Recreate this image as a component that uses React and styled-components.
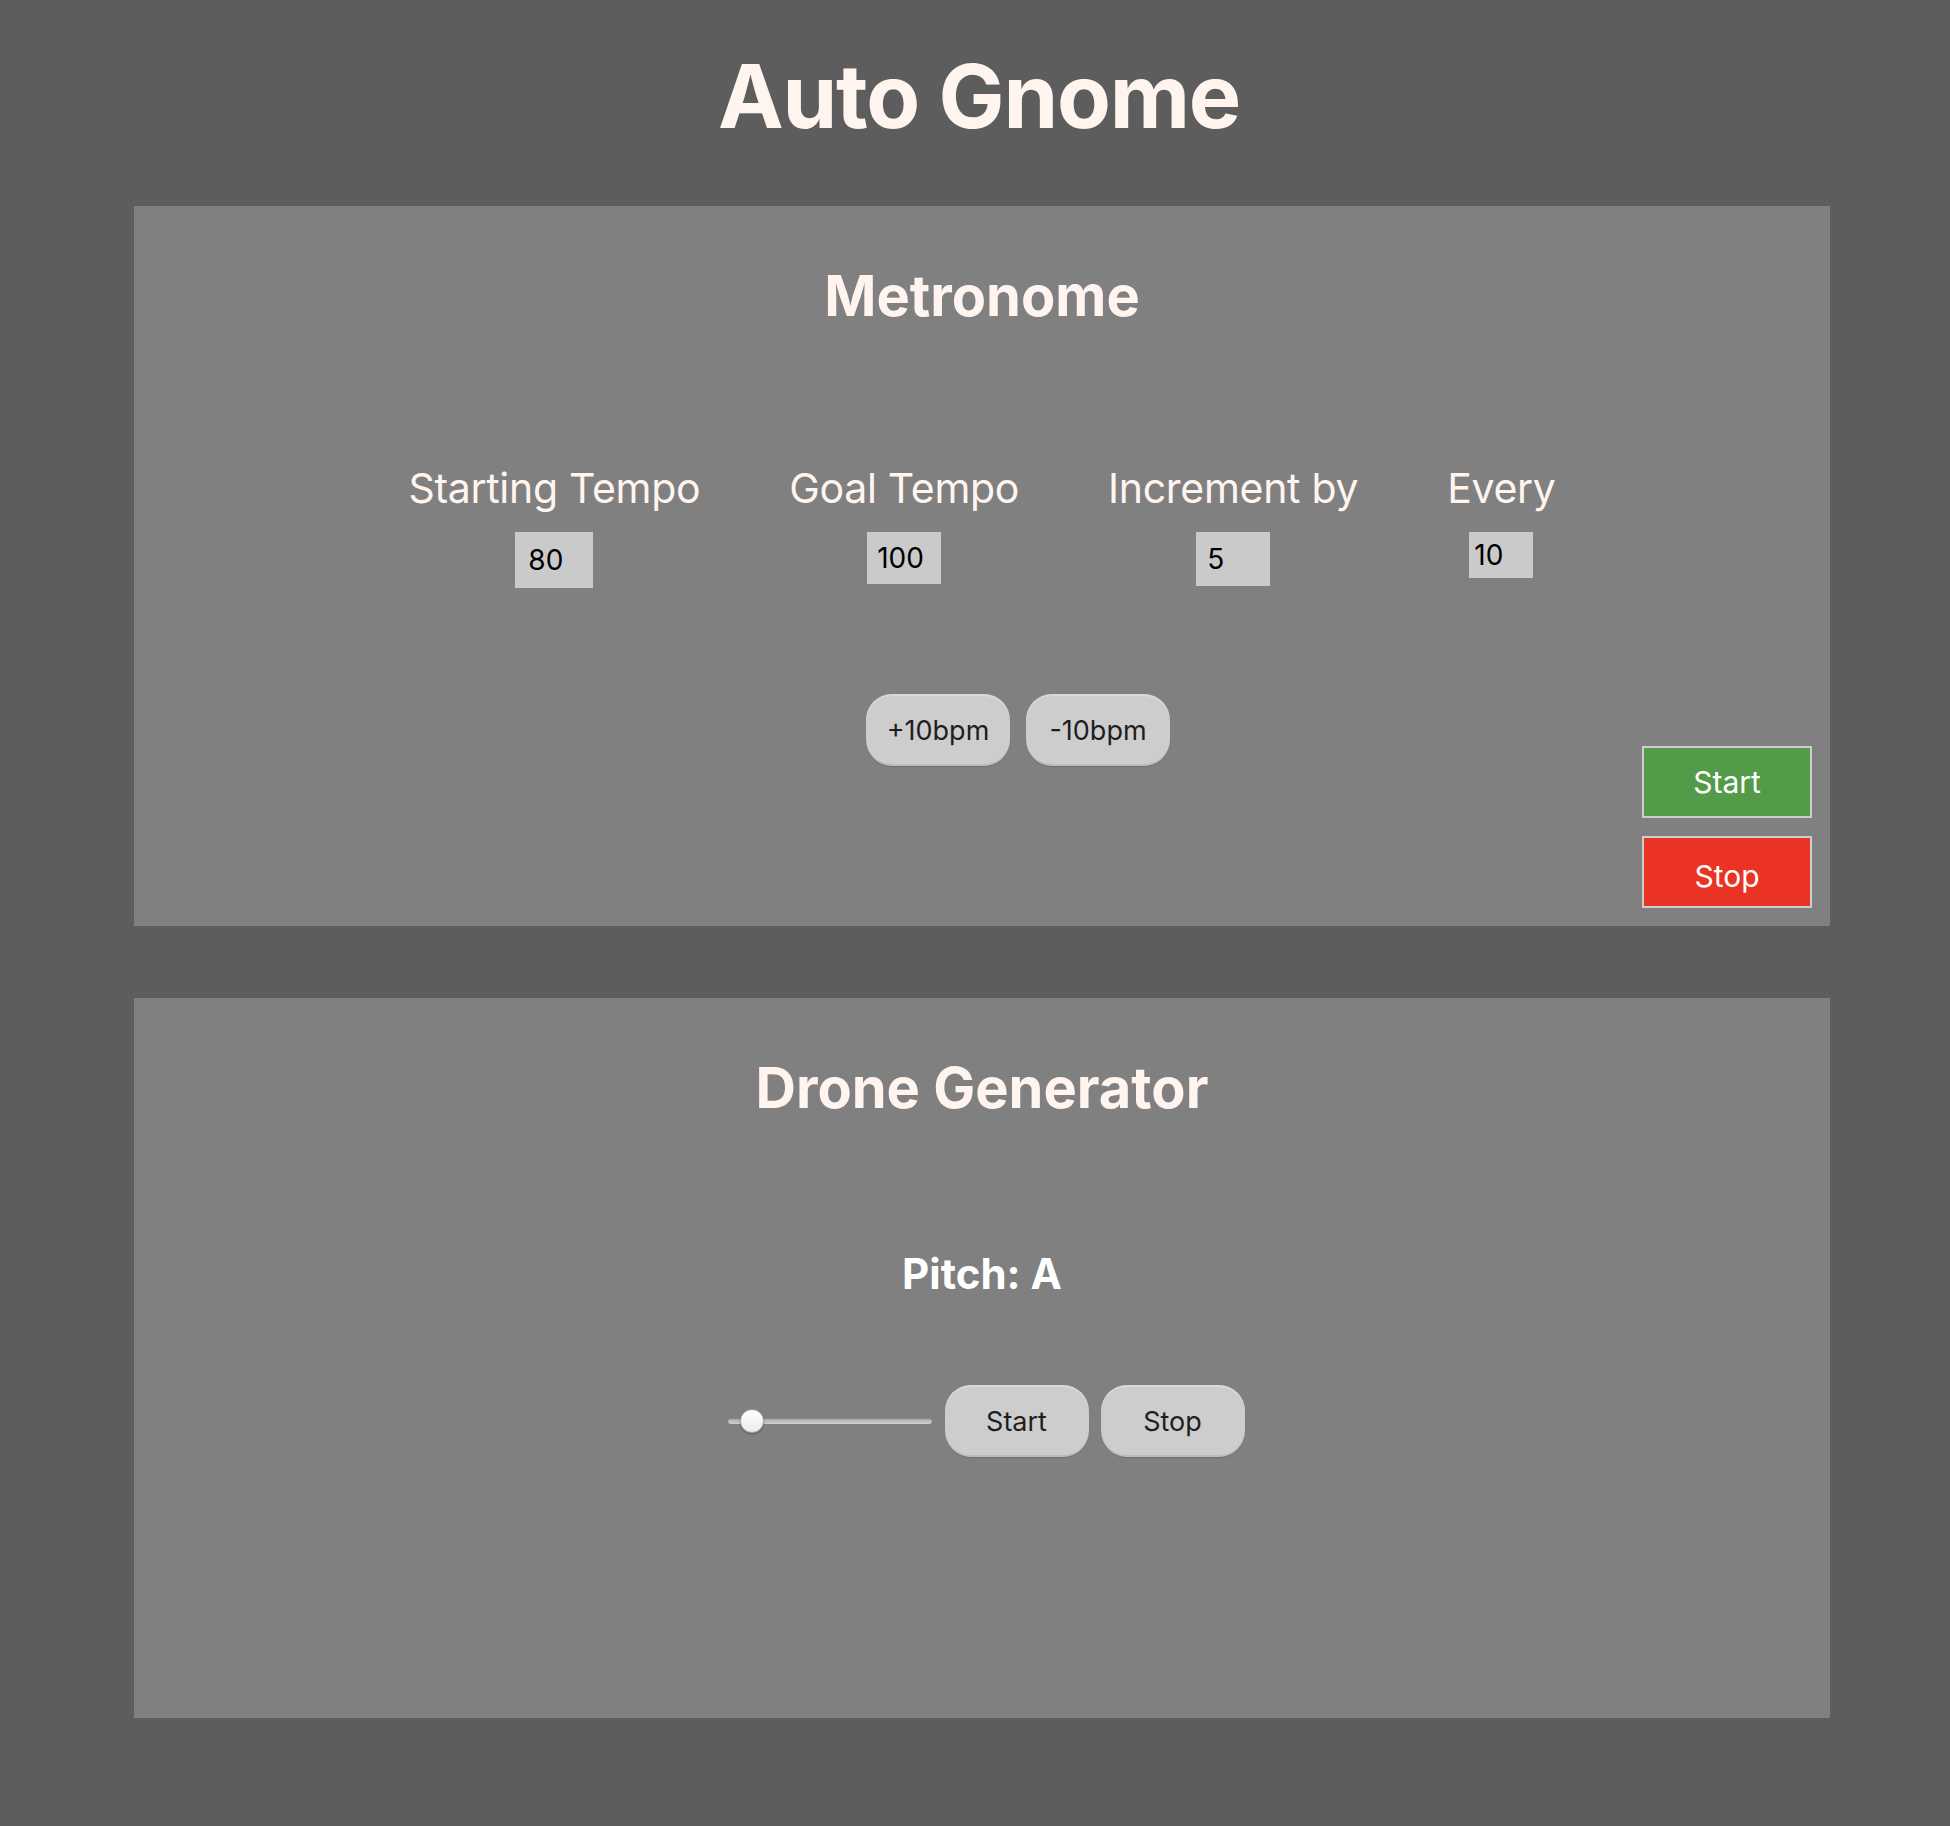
import React from 'react';
import styled, { createGlobalStyle } from 'styled-components';

const GlobalStyle = createGlobalStyle`
  html, body {
    margin: 0;
    padding: 0;
    background: #5d5d5d;
    font-family: Inter, "Noto Sans", "Liberation Sans", sans-serif;
  }
`;

const Page = styled.div`
  min-height: 1826px;
  padding: 52px 0 108px;
  box-sizing: border-box;
`;

const Title = styled.h1`
  margin: 0 0 66px;
  padding-left: 8px;
  font-size: 88px;
  line-height: 1;
  font-weight: 700;
  letter-spacing: -1.2px;
  color: #fff5ee;
  text-align: center;
`;

const Panel = styled.section`
  box-sizing: border-box;
  height: 720px;
  margin-left: 134px;
  margin-right: 120px;
  margin-bottom: ${(p) => (p.$last ? '0' : '72px')};
  padding-top: 62px;
  background: #808080;
  display: flex;
  flex-direction: column;
`;

const PanelTitle = styled.h2`
  margin: 0;
  font-size: 56px;
  line-height: 1;
  font-weight: 700;
  color: #fff5ee;
  text-align: center;
`;

const Fields = styled.div`
  margin-top: 144px;
  display: flex;
  justify-content: center;
  align-items: flex-start;
  gap: 89px;
`;

const Field = styled.label`
  display: flex;
  flex-direction: column;
  align-items: center;
  gap: 23px;
`;

const FieldLabel = styled.span`
  font-size: 41px;
  line-height: 1;
  font-weight: 400;
  letter-spacing: -0.3px;
  color: #fff5ee;
  white-space: nowrap;
`;

const NumberBox = styled.input`
  box-sizing: border-box;
  width: ${(p) => p.$w}px;
  height: ${(p) => p.$h}px;
  padding: 0 0 0 ${(p) => p.$pad}px;
  border: none;
  outline: none;
  background: #cacaca;
  color: #000;
  font-family: Inter, "Noto Sans", sans-serif;
  font-size: 28px;
`;

const Controls = styled.div`
  margin: 106px 18px 0 90px;
  display: grid;
  grid-template-columns: 1fr auto 1fr;
  align-items: start;
`;

const ButtonRow = styled.div`
  grid-column: 2;
  display: flex;
  align-items: center;
  gap: 16px;
`;

const PillButton = styled.button`
  box-sizing: border-box;
  width: 144px;
  height: 72px;
  border: none;
  border-radius: 26px;
  background: #cdcdcd;
  color: #1e1e1e;
  font-family: Inter, "Noto Sans", sans-serif;
  font-size: 27px;
  box-shadow: inset 0 -2px 0 rgba(0, 0, 0, 0.08), inset 0 2px 0 rgba(255, 255, 255, 0.25),
    0 1px 1px rgba(0, 0, 0, 0.15);
  cursor: pointer;
`;

const RunStack = styled.div`
  grid-column: 3;
  justify-self: end;
  margin-top: 52px;
  display: flex;
  flex-direction: column;
  gap: 18px;
`;

const RunButton = styled.button`
  box-sizing: border-box;
  width: 170px;
  height: 72px;
  padding: ${(p) => (p.$stop ? '8px 0 0' : '0')};
  border: 2px solid #cdcdcd;
  background: ${(p) => (p.$stop ? '#ea3323' : '#539b48')};
  color: #ffffff;
  font-family: Inter, "Noto Sans", sans-serif;
  font-size: 30px;
  cursor: pointer;
`;

const Pitch = styled.h3`
  margin: 137px 0 0;
  font-size: 42px;
  line-height: 1;
  font-weight: 700;
  color: #ffffff;
  text-align: center;
`;

const DroneRow = styled.div`
  margin-top: 90px;
  display: flex;
  justify-content: center;
  align-items: center;
  gap: 12px;
  padding-left: 8px;
`;

const Slider = styled.input.attrs({ type: 'range' })`
  -webkit-appearance: none;
  appearance: none;
  width: 204px;
  height: 26px;
  margin: 0 1px 0 0;
  background: transparent;

  &::-webkit-slider-runnable-track {
    height: 6px;
    border-radius: 3px;
    background: linear-gradient(#a9a9a9, #cfcfcf);
    box-shadow: inset 0 1px 1px rgba(0, 0, 0, 0.25);
  }

  &::-webkit-slider-thumb {
    -webkit-appearance: none;
    width: 24px;
    height: 24px;
    margin-top: -9px;
    border-radius: 50%;
    border: 1px solid #a5a5a5;
    background: linear-gradient(#ffffff, #ececec);
    box-shadow: 0 1px 2px rgba(0, 0, 0, 0.3);
  }
`;

const fields = [
  { label: 'Starting Tempo', value: '80', w: 78, h: 56, pad: 13 },
  { label: 'Goal Tempo', value: '100', w: 74, h: 52, pad: 10 },
  { label: 'Increment by', value: '5', w: 74, h: 54, pad: 11 },
  { label: 'Every', value: '10', w: 64, h: 46, pad: 5 },
];

const Metronome = () => {
  return (
    <Panel>
      <PanelTitle>Metronome</PanelTitle>
      <Fields>
        {fields.map((f) => (
          <Field key={f.label}>
            <FieldLabel>{f.label}</FieldLabel>
            <NumberBox defaultValue={f.value} $w={f.w} $h={f.h} $pad={f.pad} />
          </Field>
        ))}
      </Fields>
      <Controls>
        <ButtonRow>
          <PillButton>+10bpm</PillButton>
          <PillButton>-10bpm</PillButton>
        </ButtonRow>
        <RunStack>
          <RunButton>Start</RunButton>
          <RunButton $stop>Stop</RunButton>
        </RunStack>
      </Controls>
    </Panel>
  );
};

const Drone = () => {
  return (
    <Panel $last>
      <PanelTitle>Drone Generator</PanelTitle>
      <Pitch>Pitch: A</Pitch>
      <DroneRow>
        <Slider min={0} max={100} defaultValue={7} />
        <PillButton>Start</PillButton>
        <PillButton>Stop</PillButton>
      </DroneRow>
    </Panel>
  );
};

const App = () => {
  return (
    <>
      <GlobalStyle />
      <Page>
        <Title>Auto Gnome</Title>
        <Metronome />
        <Drone />
      </Page>
    </>
  );
};

export default App;
